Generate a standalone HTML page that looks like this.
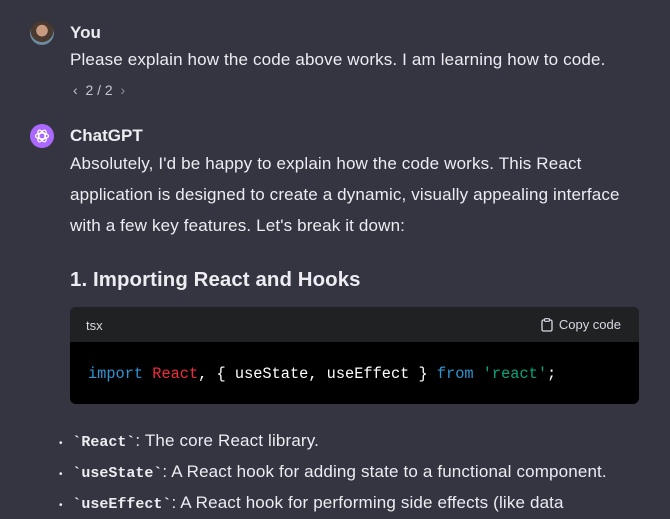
<!DOCTYPE html>
<html><head><style>
body{margin:0;width:670px;height:519px;background:#343541;overflow:hidden;font-family:"Liberation Sans",sans-serif;color:#ececf1;position:relative}
.a{position:absolute;white-space:nowrap}
.t{font-size:17px;color:#ececf1;letter-spacing:0.15px}
.b{font-weight:bold;font-size:17px;color:#ececf1}
.m{font-family:"Liberation Mono",monospace}
</style></head><body>
<div class="a" style="left:30px;top:21px;width:24px;height:24px;border-radius:50%;background:radial-gradient(circle at 50% 40%,#c89a80 0 30%,#4a3a30 32% 60%,#6c8aa0 62%);"></div>
<div class="a b" style="left:70px;top:23px">You</div>
<div class="a t" style="left:70px;top:50px">Please explain how the code above works. I am learning how to code.</div>
<div class="a" style="left:73px;top:82px;font-size:14px;color:#c5c5d2">‹ &nbsp;2 / 2 &nbsp;<span style="color:#8e8ea0">›</span></div>
<div class="a" style="left:30px;top:124px;width:24px;height:24px;border-radius:50%;background:#ab68ff">
<svg width="24" height="24" viewBox="0 0 24 24"><g fill="none" stroke="#fff" stroke-width="1.2"><circle cx="12" cy="12" r="3.5"/><ellipse cx="12" cy="12" rx="6.5" ry="3" /><ellipse cx="12" cy="12" rx="6.5" ry="3" transform="rotate(60 12 12)"/><ellipse cx="12" cy="12" rx="6.5" ry="3" transform="rotate(120 12 12)"/></g></svg></div>
<div class="a b" style="left:70px;top:126px">ChatGPT</div>
<div class="a t" style="left:70px;top:154px">Absolutely, I'd be happy to explain how the code works. This React</div>
<div class="a t" style="left:70px;top:185px">application is designed to create a dynamic, visually appealing interface</div>
<div class="a t" style="left:70px;top:216px">with a few key features. Let's break it down:</div>
<div class="a" style="left:70px;top:269px;font-size:20.4px;font-weight:bold;color:#ececf1;letter-spacing:0.1px">1. Importing React and Hooks</div>
<div class="a" style="left:70px;top:307px;width:569px;height:97px;border-radius:6px;background:#000;overflow:hidden">
<div style="height:35px;background:#202123;position:relative">
<div class="a" style="left:16px;top:11px;font-size:13px;color:#d9d9e3">tsx</div>
<div class="a" style="right:18px;top:10px;font-size:13px;color:#d9d9e3"><svg width="12" height="14" viewBox="0 0 12 14" style="vertical-align:-3px;margin-right:6px"><rect x="1" y="2" width="10" height="11" rx="1.5" fill="none" stroke="#d9d9e3" stroke-width="1.3"/><rect x="3.5" y="0.7" width="5" height="2.6" rx="0.8" fill="#202123" stroke="#d9d9e3" stroke-width="1.1"/></svg>Copy code</div>
</div>
<div class="a m" style="left:18px;top:58px;font-size:15.3px;color:#fff"><span style="color:#2e95d3">import</span> <span style="color:#f22c3d">React</span>, { useState, useEffect } <span style="color:#2e95d3">from</span> <span style="color:#00a67d">'react'</span>;</div>
</div>
<div class="a t" style="left:59px;top:431px"><span style="font-size:10px">•</span>&nbsp; <b class="m" style="font-size:15px;letter-spacing:0">`React`</b>: The core React library.</div>
<div class="a t" style="left:59px;top:462px"><span style="font-size:10px">•</span>&nbsp; <b class="m" style="font-size:15px;letter-spacing:0">`useState`</b>: A React hook for adding state to a functional component.</div>
<div class="a t" style="left:59px;top:493px"><span style="font-size:10px">•</span>&nbsp; <b class="m" style="font-size:15px;letter-spacing:0">`useEffect`</b>: A React hook for performing side effects (like data</div>
</body></html>
